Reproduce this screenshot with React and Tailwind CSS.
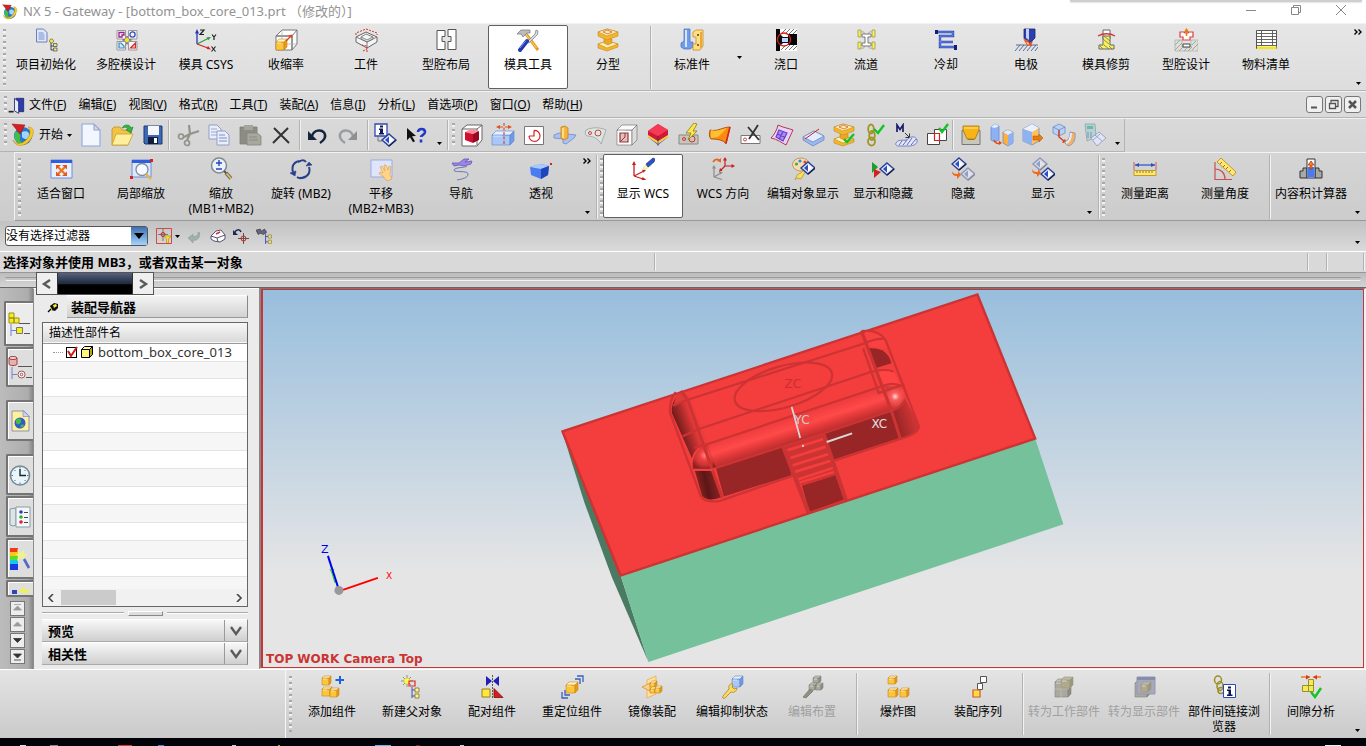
import React from 'react';

/* ---------- drawing helpers ---------- */

function Svg({ children, size = 'size-6', box = '0 0 24 24' }) {
  return (
    <svg viewBox={box} className={`${size} shrink-0`} fill="none" aria-hidden="true">
      {children}
    </svg>
  );
}

const GOLD = { f: '#fdc53a', t: '#fff3c0', s: '#e8981c', o: '#c98a1c' };
const BLUE = { f: '#a9c8f8', t: '#e4f0ff', s: '#6f9be6', o: '#5f84c8' };
const GRAY = { f: '#a9a99c', t: '#c4c4bb', s: '#8d8d83', o: '#85857c' };

function Box({ x, y, w, h, d = 3, c = GOLD }) {
  return (
    <g stroke={c.o} strokeWidth=".6" strokeLinejoin="round">
      <path d={`M${x} ${y + d}h${w}v${h}h${-w}z`} fill={c.f} />
      <path d={`M${x} ${y + d}l${d} ${-d}h${w}l${-d} ${d}z`} fill={c.t} />
      <path d={`M${x + w} ${y + d}l${d} ${-d}v${h}l${-d} ${d}z`} fill={c.s} />
      <path d={`M${x + 1} ${y + d + 1}h${w / 2}`} stroke="#fff" strokeWidth="1" opacity=".6" />
    </g>
  );
}

function Gem({ x, y, pale }) {
  return (
    <g opacity={pale ? 0.4 : 1}>
      <path d={`M${x} ${y - 6}l7 6-7 6-7-6z`} fill="#dfe6ff" stroke="#2a3f8f" strokeWidth="1.4" />
      <path d={`M${x} ${y - 3.5}v7l-4-3.5z`} fill="#2c4fc4" />
      <path d={`M${x} ${y - 3.5}v7l4-3.5z`} fill="#fff" />
      <path d={`M${x} ${y + 6}l7-6`} stroke="#1b2348" strokeWidth="1.4" />
    </g>
  );
}

const Check = ({ d = 'M12 18l3 3 7-9', w = 2.4 }) => <path d={d} stroke="#12c226" strokeWidth={w} />;

const Star = ({ x, y }) => (
  <g>
    <path d={`M${x - 6} ${y}h12M${x} ${y - 6}v12M${x - 4} ${y - 4}l8 8M${x + 4} ${y - 4}l-8 8`} stroke="#6f9a6a" strokeWidth=".9" />
    <circle cx={x} cy={y} r="3" fill="#fff36a" stroke="#e0c81a" strokeWidth=".6" />
  </g>
);

const Tree = ({ x, y }) => (
  <g>
    <path d={`M${x} ${y}v11M${x} ${y + 3}h3M${x} ${y + 9}h3`} stroke="#4550b5" strokeWidth="1" />
    <path d={`M${x + 3} ${y + 1}h4v4h-4zM${x + 3} ${y + 7}h4v4h-4z`} fill="#fbf29a" stroke="#8a7f2a" strokeWidth=".9" />
  </g>
);

const Plates = () => (
  <g stroke="#c08a22" strokeWidth=".6" strokeLinejoin="round">
    <path d="M2 16l9-3 11 3v3l-11 4-9-3z" fill="#f5b52b" />
    <path d="M2 16l9-3 11 3-11 4z" fill="#fff0b4" />
    <path d="M8 11l4-1 4 1v4l-4 2-4-2z" fill="#f0a428" />
    <path d="M2 4l9-3 11 3v4l-11 4L2 8z" fill="#f5b52b" />
    <path d="M2 4l9-3 11 3-11 4z" fill="#ffedb0" />
    <path d="M7 4l4-2 5 2-4 2z" stroke="#c03818" />
  </g>
);

/* ---------- icons ---------- */

const ICONS = {
  project: (
    <>
      <path d="M2.500 1h7l3.500 3.500V14H2.500z" fill="#dfe7fa" stroke="#6d7fb8" />
      <path d="M4.500 5h5M4.500 7h6M4.500 9h6M4.500 11h6" stroke="#7186c8" strokeWidth=".9" />
      <circle cx="17.500" cy="13" r="2" fill="#f5e94e" stroke="#77772a" strokeWidth=".8" />
      <path d="M17 15v7h3M17 18h3" stroke="#333" strokeWidth=".9" />
      <path d="M19.500 15.500h3.500v3h-3.500zM19.500 20h3.500v3h-3.500z" fill="#eee68c" stroke="#555" strokeWidth=".8" />
    </>
  ),
  multi: (
    <>
      <path d="M3 2.500h8.500v8.500H3zM14.500 2.500H23v8.500h-8.500zM3 13.500h8.500V22H3zM14.500 13.500H23V22h-8.500z" fill="#f6f6fa" stroke="#999" />
      <path d="M5 9V4.500h5V7H8v2z" stroke="#a0208c" strokeWidth="1.300" />
      <circle cx="18.500" cy="6.500" r="2.600" stroke="#2c50c0" strokeWidth="1.300" />
      <path d="M5 20v-5h2l3 3v2z" stroke="#3f88c4" strokeWidth="1.200" fill="#cfe6f8" />
      <path d="M16.500 20h5v-5z" stroke="#d42a2a" strokeWidth="1.200" fill="#ffc9c9" />
      <path d="M13 8v8.500M8.500 12h9" stroke="#333" />
      <path d="M13 9.500l2.500 2.500-2.500 2.500-2.500-2.500z" fill="#ffe61a" />
    </>
  ),
  csys: (
    <>
      <path d="M3 16V4" stroke="#2334b8" strokeWidth="1.300" /><path d="M3 1L1 5.500h4z" fill="#2334b8" />
      <path d="M3 16l11-5.500" stroke="#20a030" strokeWidth="1.200" /><path d="M17 9l-4.500.3 1.800 3z" fill="#20a030" />
      <path d="M3 16l11 4" stroke="#d42020" strokeWidth="1.200" /><path d="M17 21.500l-3-3.500-1.500 3z" fill="#d42020" />
      <path d="M6 2h4L6 6.500h4M18 6.500l2 2.500 2-2.500M20 9v3M17.500 18.500l4 5M21.500 18.500l-4 5" stroke="#222" strokeWidth="1.200" />
    </>
  ),
  shrink: (
    <>
      <path d="M2 8l6-6h15l-5 6zM18 8v14l5-6V2M2 8v14h16V8z" fill="#fff" stroke="#777" />
      <path d="M8 2v14h15M8 16l-6 6" stroke="#aaa" strokeWidth=".7" />
      <Box x={2} y={11} w={8} h={8} d={3} />
      <path d="M12 13l5-5" stroke="#e0461c" strokeWidth="1.400" /><path d="M18.500 6.500l-4 .8 3 3z" fill="#e0461c" />
    </>
  ),
  workpiece: (
    <>
      <path d="M2 9v5l11 6 10-6V9L12 4z" fill="#f4f4f4" stroke="#666" />
      <path d="M2 9l11 5 10-5M13 14v6M7 9l6 3 6-3-7-3zM7 9v2l6 3 6-3V9" stroke="#777" strokeWidth=".9" />
      <path d="M2 7V5l10-4 11 4v2M13 24v-6l-5-1M9 23l4-2" stroke="#d43030" strokeDasharray="2 1.200" />
    </>
  ),
  layout: (
    <g stroke="#555" fill="#fff">
      <path d="M3 2.500h8v6H8v5h3v8H3z" />
      <path d="M14 1.500h8v20h-8v-8h3v-5h-3z" />
    </g>
  ),
  hammer: (
    <>
      <path d="M10 6l12 16" stroke="#e79a1c" strokeWidth="3" />
      <path d="M9.500 6l11 14" stroke="#ffd680" strokeWidth="1" />
      <path d="M1 6l4-4h9v3h-3L7 9 5 6z" fill="#b9bdc2" stroke="#7b8086" strokeWidth=".8" />
      <path d="M11 14l8-8 1-4 2 1-.5 3.500L13 15z" fill="#d7dade" stroke="#71767c" strokeWidth=".7" />
      <path d="M4 22l7-9" stroke="#2238b0" strokeWidth="4" strokeLinecap="round" />
      <path d="M4 20l6-7.500" stroke="#7d93ee" strokeWidth="1" />
    </>
  ),
  parting: <Plates />,
  standard: (
    <>
      <path d="M4 1h6v13h3v5l-3 2H4l-3-2v-4l3-2z" fill="#6f9cec" stroke="#5578bc" strokeWidth=".8" />
      <path d="M6 2v17" stroke="#d6e5ff" strokeWidth="2" />
      <path d="M13 4l3-2h7v16l-3 4h-7v-6h3V9h-3z" fill="#ffdf86" stroke="#c98a1c" strokeWidth=".8" />
      <path d="M21 4v16" stroke="#e8a83c" strokeWidth="2" />
      <circle cx="18" cy="7" r="1" fill="#5a3a00" /><circle cx="18" cy="17" r="1" fill="#5a3a00" />
    </>
  ),
  gate: (
    <>
      <path d="M2 1h21v22H2z" fill="#fff" />
      <path d="M2 1h4v22H2zM14 6h9v11h-9z" fill="#050505" />
      <path d="M7 6l5-5M11 6l5-5M15 6l5-5M19 6l4-4M7 22l5-5M11 22l5-5M15 22l5-5M19 22l4-4" stroke="#666" strokeWidth=".9" />
      <path d="M6 6l3 3h5v6H9l-3 3z" fill="#111" />
      <path d="M8 10h6v4H8z" fill="#b8d8ff" />
      <circle cx="10" cy="11.500" r="6.500" stroke="#e01c1c" strokeWidth="1.300" />
    </>
  ),
  runner: (
    <>
      <path d="M5 4h5v3H5zM5 17h5v3H5zM15 4h5v3h-5zM15 17h5v3h-5z" fill="#fff" stroke="#999" strokeWidth=".8" />
      <path d="M8 6h9v3h-3v6h3v3H8v-3h3V9H8z" fill="#fff" stroke="#777" />
      <path d="M4 2h3v7H4zM18 2h3v7h-3zM4 14h3v7H4zM18 14h3v7h-3z" fill="#f6ef62" stroke="#a09a48" strokeWidth=".8" />
    </>
  ),
  cooling: (
    <>
      <path d="M3 4h16v4H6v6h13M6 13v6h15" stroke="#2446b8" strokeWidth="2.400" />
      <path d="M3 4h16v4H6v6h13M6 13v6h15" stroke="#8fa8f0" strokeWidth=".7" />
      <path d="M1 2h3v4H1zM20 17h3v5h-3z" fill="#101f80" />
    </>
  ),
  electrode: (
    <>
      <path d="M2 17h22M1 23l5-6M5 23l5-6M9 23l5-6M13 23l5-6M17 23l5-6M21 23l3-4" stroke="#5a6a9a" />
      <path d="M10 1h11v9l-5 5-1-1-5-4z" fill="#2a3fb0" stroke="#1b2670" strokeWidth=".8" />
      <path d="M12 1h3v11l-3-2z" fill="#c3d0f8" />
      <path d="M9 10l4 3 1-2 1 4 4-2-2 5-4-1-2-3z" fill="#f0521c" />
      <path d="M12 14l3 1-1 2z" fill="#ffe26a" />
    </>
  ),
  trim: (
    <>
      <path d="M9 2h7v9H9z" fill="#fff" stroke="#666" />
      <path d="M9 8h7v9h4v4H5v-4h4z" fill="#f3ef6a" stroke="#666" />
      <path d="M9 11l6 5M10 8l6 5M6 18l3 3M10 17l5 4M15 18l3 3" stroke="#7c7a25" strokeWidth=".8" />
      <path d="M4 8c5-3 12-3 17 0" stroke="#d83030" strokeWidth="1.300" />
    </>
  ),
  pocket: (
    <>
      <path d="M1 12h7v7h9v-7h7v11H1z" fill="#dededa" stroke="#aaa" strokeWidth=".7" />
      <path d="M1 17l5-5M1 22l7-7M5 23l4-4M10 23l3-3M14 23l4-4M18 22l6-6M18 17l4-4" stroke="#96a088" strokeWidth=".8" />
      <path d="M9 16v3h7v-3z" fill="#fff" stroke="#444" />
      <path d="M6 4h4l1 1h3l1-1h4v5h-3v3H9V9H6z" fill="#fff" stroke="#e03c3c" strokeWidth="1.200" />
      <path d="M12.500 8V3" stroke="#e87a10" strokeWidth="1.500" /><path d="M10 4l2.500-4L15 4z" fill="#e87a10" />
    </>
  ),
  bom: (
    <>
      <path d="M2.500 2.500h20v18h-20z" fill="#fff" stroke="#555" />
      <path d="M3 18.500h19.500V21H3z" fill="#f5e51c" />
      <path d="M2 5.500h21M2 8.500h21M2 11.500h21M2 14.500h21M2 17.500h21M7.500 2.500v15M18.500 2.500v15" stroke="#555" strokeWidth=".9" />
    </>
  ),

  logo: (
    <>
      <circle cx="12" cy="13" r="9" fill="#2a74c8" />
      <path d="M4 9c4-1 6 3 5 6s2 5 5 7c-7 1-12-5-10-13z" fill="#3fbf4a" />
      <path d="M11 9c4-2 8 0 7 4s-4 4-7 1z" fill="#9fd6ff" />
      <path d="M2 17c3 6 12 4 16-4 2-4 1-7-1-9 5 0 7 4 4 10-4 9-16 12-19 3z" fill="#f9cb1e" stroke="#b8860f" strokeWidth=".5" />
      <path d="M1 1l13 1-5 9z" fill="#d81e1e" stroke="#8f0f0f" strokeWidth=".5" />
    </>
  ),
  door: (
    <>
      <path d="M11 4h9v16h-9z" fill="#2c3bb4" stroke="#20285f" />
      <path d="M9 4l5 4v14l-5-3z" fill="#e6ecff" stroke="#20285f" />
      <path d="M2 20h6" stroke="#222" strokeWidth="2" />
    </>
  ),
  fileNew: <path d="M3 1h12l6 6v16H3zM15 1v6h6" fill="#f1f6ff" stroke="#8fa6dc" strokeWidth="1.100" />,
  fileOpen: (
    <>
      <path d="M2 6l2-2h6l2 3h9v4L18 22H2z" fill="#f3c444" stroke="#b8922c" strokeWidth=".8" />
      <path d="M2 22l4-11h17l-5 11z" fill="#ffee9c" stroke="#c89f34" strokeWidth=".8" />
      <path d="M12 5c2-4 8-4 9 0l2-1-2 6-5-3 2-1c-1-2-4-2-6-1z" fill="#33b540" stroke="#1d7a28" strokeWidth=".6" />
    </>
  ),
  save: (
    <>
      <path d="M3 3h18v18H4l-1-1z" fill="#3f68b4" stroke="#1e3670" />
      <path d="M7 3h11v9H7z" fill="#f4f6fb" />
      <path d="M7 14h10v7H7z" fill="#101d3c" />
      <path d="M13 15h3v5h-3z" fill="#fff" />
    </>
  ),
  cut: (
    <g stroke="#93938a" strokeWidth="1.700">
      <path d="M13 2l1 9-3 6" strokeWidth="2.200" /><path d="M23 8l-9 3-6 3" strokeWidth="2.200" />
      <circle cx="5" cy="13.500" r="2.500" /><circle cx="11" cy="20" r="2.500" />
    </g>
  ),
  copy: (
    <g fill="#e8eefc" stroke="#8a97be" strokeWidth=".9">
      <path d="M2 2h8l4 4v10H2z" /><path d="M4 6h6M4 9h7M4 12h7" strokeWidth=".8" />
      <path d="M10 8h8l4 4v10H10z" /><path d="M12 12h6M12 15h8M12 18h8" stroke="#7484bc" />
    </g>
  ),
  paste: (
    <>
      <path d="M2 4h17v17H2z" fill="#8c8c84" stroke="#7d7d76" strokeWidth=".8" />
      <path d="M6 2h9v5H6z" fill="#a5a59c" />
      <path d="M9 10h10l4 3v9H9z" fill="#a8a89f" stroke="#85857d" strokeWidth=".8" />
      <path d="M11 14h8M11 17h9" stroke="#8a8a82" />
    </>
  ),
  del: <path d="M5 5l15 15M19 5L4 20" stroke="#333" strokeWidth="2" />,
  undo: (
    <>
      <path d="M7 13C9 7 16 6 19 9.500c3 4 0 8-4 10.500" stroke="#16233f" strokeWidth="2.400" />
      <path d="M3 8v9h9z" fill="#16233f" />
    </>
  ),
  redo: (
    <>
      <path d="M17 13C15 7 8 6 5 9.500c-3 4 0 8 4 10.500" stroke="#9a9da0" strokeWidth="2.400" />
      <path d="M21 8v9h-9z" fill="#8c9092" />
    </>
  ),
  info: (
    <>
      <path d="M2 1h12v12H2z" fill="#fff" stroke="#3148b8" strokeWidth="1.300" />
      <path d="M7 2.500h3v2H7zM6 5.500h4v4.500h1v1.500H6V10h1V7H6z" fill="#131c50" />
      <path d="M5 14v4h4" stroke="#777" />
      <Gem x={16} y={17} />
    </>
  ),
  help: (
    <>
      <path d="M3 5l9 8-4 .3 3 5-2 1-3-5-3 3z" fill="#111" />
      <path d="M14 9c0-4 7-4 7 0 0 3-4 3-4 5M17 16.500v3" stroke="#2238c8" strokeWidth="2.600" />
    </>
  ),
  redCube: (
    <>
      <path d="M2 6l5-4h15v15l-5 6H2zM2 6h15v16M17 6l5-4" fill="#fff" stroke="#666" />
      <path d="M5 9l6-3 8 2-6 3z" fill="#ff8c9c" /><path d="M5 9l8 2v9l-8-3z" fill="#d01030" /><path d="M13 11l6-3v9l-6 3z" fill="#960a20" />
    </>
  ),
  split: (
    <>
      <Box x={1} y={8} w={18} h={10} d={4} c={BLUE} />
      <path d="M13 0v22" stroke="#d02020" strokeDasharray="3 1.500" strokeWidth=".9" />
      <path d="M5 4l4-2v1.500h3v1H9V6zM21 4l-4-2v1.500h-3v1h3V6z" fill="#e0521c" />
    </>
  ),
  patch: (
    <>
      <path d="M2.500 3.500h19v18h-19z" fill="#fff" stroke="#777" />
      <path d="M12 7.500V13H7M12 7.500A5.500 5.500 0 1 1 7 13" stroke="#d02424" strokeWidth="1.200" />
    </>
  ),
  joint: (
    <>
      <path d="M1 12l5-2 17 2-2 3-8 6-3-1v-4l-9-1z" fill="#a9c2f5" stroke="#6f8ac8" strokeWidth=".8" />
      <path d="M8 4l4-1 3 2v10l-4 2-3-2z" fill="#f6b43a" stroke="#b9790f" strokeWidth=".7" /><path d="M10 5v10" stroke="#ffe9a8" strokeWidth="1.500" />
    </>
  ),
  surface: (
    <>
      <path d="M2 7c7-3 13-3 20 0l-5 14c-2-4-6-8-14-8-2-1-2-4-1-6z" fill="#dbe6e2" stroke="#9aaaa6" strokeWidth=".9" />
      <circle cx="6" cy="10" r="1.500" stroke="#d03030" strokeWidth=".9" /><circle cx="14" cy="10" r="3" stroke="#d03030" strokeWidth=".9" />
    </>
  ),
  boxFrame: (
    <>
      <Box x={2} y={2} w={15} h={15} d={5} c={{ f: '#fff', t: '#fafafa', s: '#ddd', o: '#666' }} />
      <path d="M5 10h8v9H5z" fill="#d9c3c3" stroke="#a03030" strokeWidth="1.200" />
      <path d="M6 18l4-4v-4" stroke="#a03030" />
    </>
  ),
  layers: (
    <>
      <path d="M2 14l10 8 10-8v-5H2z" fill="#3655c8" />
      <path d="M2 11l10 7 10-7v3l-10 7-10-7z" fill="#ffcf3a" />
      <path d="M2 8l10-7 10 6v5l-10 6L2 12z" fill="#d01838" /><path d="M2 8l10-7 10 6-10 6z" fill="#f43a54" />
      <path d="M12 13v10" stroke="#22326e" strokeWidth=".6" />
    </>
  ),
  flash: (
    <>
      <path d="M2 12h19v9H2z" fill="#c6c6bd" stroke="#888" />
      <circle cx="7" cy="16" r="1.500" stroke="#d03030" /><circle cx="15" cy="16" r="3" stroke="#d03030" />
      <path d="M17 0L9 10h5l-3 7 9-9h-4l4-7z" fill="#ffe74a" stroke="#8a7a1a" strokeWidth=".8" />
    </>
  ),
  orangeSheet: (
    <>
      <path d="M2 7c7 2 13-3 20-3l-4 17c-2-4-9-5-15-5-2-2-2-6-1-9z" fill="#f98b12" stroke="#a83c08" strokeWidth=".8" />
      <path d="M3 7c7 2 11-1 16-2l-9 9-7 1z" fill="#ffd03a" opacity=".8" />
      <path d="M18 20l4-16" stroke="#d82020" strokeWidth="1.500" />
    </>
  ),
  cutSheet: (
    <>
      <path d="M2 12.500h19v8H2z" fill="#fff" stroke="#777" />
      <circle cx="6" cy="16.500" r="1.500" stroke="#d03030" strokeWidth=".9" />
      <path d="M9 4l11 13M19 2l-9 14" stroke="#333" strokeWidth="1.800" />
    </>
  ),
  grid: (
    <>
      <path d="M8 2c6 3 10 3 15 5l-7 15c-4-2-9-6-15-7 3-3 6-8 7-13z" fill="#e3d5fa" stroke="#c03050" />
      <path d="M9 7l8 3-4 8-7-4zM13 8.500l-4 8M7.500 11l8 3.500" stroke="#6a3cc8" strokeWidth="1.200" fill="#a98cf0" />
    </>
  ),
  slab: (
    <>
      <path d="M2 14l11-6 10 5v4l-11 6-10-6z" fill="#9ab9f0" stroke="#6f88c0" strokeWidth=".8" /><path d="M2 14l11-6 10 5-11 6z" fill="#e2edff" stroke="#6f88c0" strokeWidth=".8" />
      <path d="M4 16L18 6" stroke="#d02020" />
    </>
  ),
  partCheck: (<><Plates /><Check d="M12 16l3 3 7-8" /></>),
  chainCheck: (
    <>
      <g stroke="#a19524" strokeWidth="1.800"><ellipse cx="8" cy="6" rx="2.800" ry="4.500" /><ellipse cx="9" cy="12.500" rx="2.800" ry="4.500" /><ellipse cx="8.500" cy="18.500" rx="3.500" ry="4" /></g>
      <Check d="M11 6l4 4 6-8" />
    </>
  ),
  mHatch: (
    <>
      <path d="M3 9V2l3 4.500L9 2v7" stroke="#1b1b6a" strokeWidth="1.700" />
      <path d="M11 10l4 4M15.500 14.500v-4M15.500 14.500h-4" stroke="#333" />
      <path d="M2 20c3-5 9-1 12-4s8-3 9 1-4 6-8 6H5c-2 0-4-1-3-3z" fill="#e3e8fa" stroke="#5a68b8" strokeWidth=".8" />
      <path d="M5 22l3-4M9 22l4-5M13 22l5-7M17 22l5-6" stroke="#3a48a8" strokeWidth=".8" />
    </>
  ),
  squaresCheck: (
    <>
      <path d="M2.500 10.500h12v11h-12z" fill="#fff" stroke="#444" /><path d="M9.500 6.500h12v11h-12z" fill="#fff" stroke="#444" />
      <path d="M9.500 10.500h5v7h-5z" stroke="#d82020" strokeWidth="1.200" />
      <Check d="M14 5l3 4 6-8" />
    </>
  ),
  mold: (
    <>
      <path d="M3 7.500h3l3 9h6l3-9h3v14H3z" fill="#c8c8b8" stroke="#777" />
      <path d="M4 3h16v4l-4 9H8L4 7z" fill="#f8b414" stroke="#a8740c" strokeWidth=".8" /><path d="M5 5h14" stroke="#ffe48a" strokeWidth="1" />
    </>
  ),
  cubesA: (
    <>
      <path d="M1 4l4-3 4 2v14l-4 2-4-2z" fill="#8db2f4" stroke="#6a8ac8" strokeWidth=".8" /><path d="M1 4l4-3 4 2-4 2z" fill="#e2eeff" />
      <path d="M13 9l5-2 5 2v11l-5 3-5-3z" fill="#ffb03a" stroke="#6a8ac8" strokeWidth=".8" /><path d="M18 12v11l5-3V9z" fill="#8db0f2" /><path d="M13 9l5-2 5 2-5 3z" fill="#dce9ff" />
      <path d="M4 17c2 4 4 4 6 3" stroke="#e04a10" strokeWidth="1.600" /><path d="M12 20l-3-2.500v4.500z" fill="#e04a10" />
    </>
  ),
  cubesB: (
    <>
      <path d="M2 6l9-5 7 4v13l-7 4-9-4z" fill="#ffc25a" stroke="#6a8ac8" strokeWidth=".8" /><path d="M2 6l9-5 7 4-7 4z" fill="#e8f1ff" /><path d="M2 6l9 3v13l-9-4z" fill="#8fb2f2" />
      <path d="M12 13h6v-2l4 4-4 4v-2h-6z" fill="#e87a14" stroke="#a85008" strokeWidth=".5" />
    </>
  ),
  cubesC: (
    <>
      <path d="M1 4l6-3 6 3v6l-6 3-6-3z" fill="#b9d0f8" stroke="#6a8ac8" strokeWidth=".8" /><path d="M1 4l6 3 6-3M7 7v6" stroke="#6a8ac8" strokeWidth=".8" />
      <path d="M7 7v7l6 5" stroke="#d83c10" strokeWidth="1.400" /><path d="M15 20.500l-5-1 3-3.500z" fill="#d83c10" />
      <path d="M18 9l5 1c1 7-2 12-7 13l-4-4c4-1 6-4 6-10z" fill="#f7b15a" stroke="#7a90c8" strokeWidth=".8" /><path d="M19 10c0 6-2 9-5 10" stroke="#e0eaff" strokeWidth="2" />
    </>
  ),
  calc: (
    <>
      <path d="M2 1h10l1 13-9 4z" fill="#b7d0d6" stroke="#8aa4ac" strokeWidth=".8" /><path d="M4 3h6v3H4z" fill="#6abaa6" />
      <path d="M5 9v6M8 9v6" stroke="#7a98a2" />
      <path d="M8 15l8-6 7 6-9 8z" fill="#e0e5f6" stroke="#8a97bc" strokeWidth=".8" /><path d="M12 12l7 6M10 17l7-6" stroke="#8a97bc" strokeWidth=".8" />
    </>
  ),

  fit: (
    <>
      <path d="M2 3h21v18H2z" fill="#e8f0ff" stroke="#6d8ce0" /><path d="M2 3h21v3H2z" fill="#2f5edc" />
      <path d="M9 10l7 7M16 10l-7 7" stroke="#f0761c" strokeWidth="2.200" />
      <path d="M7 8h5l-5 4.500zM18 8v4.500L13 8zM7 19v-4.500l5 4.500zM18 19h-5l5-4.500z" fill="#e4561a" />
    </>
  ),
  region: (
    <>
      <path d="M3 3h19v17H3z" fill="#dce8ff" stroke="#6d8ce0" /><path d="M3 3h19v3H3z" fill="#2f5edc" />
      <circle cx="13" cy="12.500" r="6" fill="#f4faff" stroke="#889" strokeWidth="1.300" />
      <path d="M17 17l5 5" stroke="#d8b850" strokeWidth="2.500" />
      <path d="M1 19h3v3H1zM21 2h3v3h-3z" fill="#e01c1c" />
    </>
  ),
  zoom: (
    <>
      <circle cx="10" cy="8.500" r="7.500" fill="#eaf1fa" stroke="#83888e" strokeWidth="1.500" />
      <path d="M10 3v6M7 6h6M7 12h6" stroke="#2a44c0" strokeWidth="1.400" />
      <path d="M15 14l2.500 2.500" stroke="#555" strokeWidth="2" /><path d="M17 16l5 5.500" stroke="#666" strokeWidth="3.600" /><path d="M17.500 16.500l4.500 5" stroke="#f0c250" strokeWidth="1.800" />
    </>
  ),
  rotate: (
    <g stroke="#27408a" strokeWidth="2">
      <path d="M4 15C2 8 6 4 12 4M11 21c7 0 11-5 9-11M9 5.500C11 3 15 2.500 17 5M16 19.500c-3 2-6 2-8 .5" />
      <path d="M1 16l6-2-1 5zM23 8l-6 1 3-4z" fill="#27408a" strokeWidth=".6" />
    </g>
  ),
  pan: (
    <>
      <path d="M2 3h21v17H2z" fill="#dfe6fc" stroke="#9cabe0" />
      <path d="M11 15l3 1-3-6 2-1 3 5-1-6h2l2 5 1-4 2 1-1 8 2 4-5 2-4-5-4-2z" fill="#ffd48a" stroke="#d8a45c" strokeWidth=".7" />
    </>
  ),
  nav: (
    <>
      <path d="M3 6l7 0 5-4h5l-4 3 7-1-1 3-7 2-5-1-5 1z" fill="#9b86e8" stroke="#5c4db0" strokeWidth=".7" />
      <path d="M18 9c-2 2-12 1-13 4s14 0 14 4-6 5-11 6" stroke="#6a76b4" strokeWidth="1" />
    </>
  ),
  persp: (
    <>
      <path d="M1 10l11-3 8 2-1 9-7 4-10-4z" fill="#4a7bf0" /><path d="M1 10l11-3 8 2-8 3z" fill="#a8cbff" /><path d="M12 12l8-3-1 9-7 4z" fill="#1e45b8" />
      <path d="M21 6h2v2h-2z" fill="#e01c1c" />
    </>
  ),
  wcs: (
    <>
      <path d="M3 19V7M3 19l9-4.500M3 19l9 3" stroke="#c81e1e" strokeWidth="1.300" />
      <path d="M3 4L1 8h4zM15 13l-4-.3 1.500 3zM15.500 23l-4-3-.8 3z" fill="#c81e1e" />
      <path d="M12 11l6-5 2 2.500-6 4z" fill="#ffffb0" stroke="#c8c888" strokeWidth=".6" />
      <path d="M15 7l7-6 2 1-1 3-6 5z" fill="#2a55c8" stroke="#18307a" strokeWidth=".7" />
    </>
  ),
  wcsDir: (
    <>
      <path d="M3 20V11M3 20l7-4M3 20l8 2.500" stroke="#8c8c8c" strokeWidth="1.200" /><path d="M3 8l-2 3.500h4zM12 15l-4 0 1.500 2.500z" fill="#8c8c8c" />
      <path d="M14 9V3M14 9h7M14 9l-4 4" stroke="#c81e1e" strokeWidth="1.200" /><path d="M14 0l-2 3.500h4zM24 9l-3.500-2v4zM8 15l1-4 2.500 2.500z" fill="#c81e1e" />
      <path d="M2 5c2-3 4-3 6-2" stroke="#e8641c" strokeWidth="1.800" /><path d="M10 1v4.500L6 4z" fill="#e8641c" />
    </>
  ),
  palette: (
    <>
      <ellipse cx="10" cy="7.500" rx="8.500" ry="6.500" fill="#f8dcae" stroke="#b8935c" strokeWidth=".9" />
      <circle cx="5.500" cy="7" r="1.600" fill="#3ab04a" /><circle cx="9" cy="4" r="1.600" fill="#2c8ae0" /><circle cx="14" cy="5" r="1.600" fill="#e04a3a" />
      <path d="M4 23l2-5 5-3 4-6 2 2-4 6-3 5-4-1z" fill="#f8dc5a" stroke="#b89a34" strokeWidth=".8" />
      <Gem x={17} y={11} />
    </>
  ),
  showHide: (
    <>
      <path d="M1 5l6 5-6 6z" fill="#18a028" /><path d="M3 12l7 3-7 6z" fill="#d42020" /><Gem x={16} y={12} />
    </>
  ),
  hide: (
    <>
      <Gem x={8} y={7} /><Gem x={17} y={17} pale />
      <path d="M1 14c1 3 4 3 6 3v-3l3 4-4 4v-3c-3 0-5-1-5-5z" fill="#ec6a1c" />
    </>
  ),
  show: (
    <>
      <Gem x={9} y={7} pale /><Gem x={17} y={17} />
      <path d="M1 12c1 3 4 3 6 3v-3l3 4-4 4v-3c-3 0-5-1-5-5z" fill="#ec6a1c" />
    </>
  ),
  dist: (
    <>
      <path d="M1 5v8M23 5v8" stroke="#c85c5c" /><path d="M2 8h20" stroke="#2a50c0" strokeWidth="1.200" /><path d="M2 8l4-2v4zM22 8l-4-2v4z" fill="#2a50c0" />
      <path d="M1 13.500h22v5H1z" fill="#ffe774" stroke="#c09a30" /><path d="M4 14v2M7 14v2M10 14v2M13 14v2M16 14v2M19 14v2" stroke="#9a7510" />
    </>
  ),
  angle: (
    <>
      <path d="M2 5v17.500h17M2 12c6 0 10 4 10 10" stroke="#c85050" strokeWidth="1.200" />
      <path d="M4 5l4-4 15 14-3 4z" fill="#ffe774" stroke="#c09a30" /><path d="M7 7l2-2M10 10l2-2M13 12l2-2M16 15l2-2" stroke="#9a7510" />
    </>
  ),
  volume: (
    <>
      <path d="M1 14h3v-3h4v10H1zM23 14h-3v-3h-4v10h7z" fill="#a8a8a8" stroke="#333" />
      <path d="M8 2h8v19H8z" fill="#fff" stroke="#333" /><path d="M8.500 10h7v10.500h-7z" fill="#4a7cf0" />
      <path d="M12 4l3 4h-2v4h-2V8H9z" fill="#f08020" stroke="#b02c10" strokeWidth=".7" />
    </>
  ),

  addComp: (
    <>
      <Box x={2} y={1} w={7} h={7} d={2} /><Box x={2} y={12} w={8} h={7} d={2} /><Box x={10} y={13} w={7} h={7} d={2} />
      <path d="M20 1v8M15.500 5h9" stroke="#1f62e0" strokeWidth="2" />
    </>
  ),
  newParent: (<><Star x={7} y={6} /><path d="M9 6h6v5H9z" stroke="#e02a2a" strokeWidth="1.200" /><Tree x={12} y={12} /></>),
  mate: (
    <>
      <path d="M6 1l6 5-6 5zM19 1l-6 5 6 5z" fill="#1f1fb8" /><path d="M12.500 0v24" stroke="#555" strokeDasharray="2 1" />
      <path d="M2 14h8v8H2z" fill="#ffe83a" stroke="#88741a" strokeWidth=".9" /><path d="M14 13.500l9 9h-9z" fill="#d81c1c" stroke="#7c1010" strokeWidth=".8" />
    </>
  ),
  repos: (
    <>
      <Box x={6} y={7} w={9} h={8} d={3} />
      <path d="M17 1h6v6M15 4h5v5M8 23H2v-6M10 20H5v-5" stroke="#3a5fc0" strokeWidth="1.300" />
    </>
  ),
  mirror: (
    <>
      <path d="M7 5l9-4v18l-9 4z" fill="#ffe0a0" stroke="#e8ac4a" strokeWidth=".8" /><path d="M2 12l8-4v8z" fill="#ffd08a" stroke="#d8932a" strokeWidth=".8" />
      <Box x={10} y={6} w={5} h={4} d={2} /><Box x={10} y={12} w={5} h={4} d={2} /><Box x={15} y={11} w={5} h={5} d={2} />
    </>
  ),
  suppress: (
    <>
      <Box x={12} y={1} w={8} h={8} d={3} c={BLUE} />
      <path d="M3 21l6-7c-1-3 1-6 4-5l-1 3 2 2 3-1c0 3-3 5-6 4l-6 6c-2 1-3 0-2-2z" fill="#ffd95a" stroke="#a8862c" strokeWidth=".8" />
    </>
  ),
  arrange: (
    <>
      <Box x={13} y={1} w={6} h={5} d={2} c={GRAY} /><Box x={9} y={8} w={6} h={5} d={2} c={GRAY} /><Box x={16} y={8} w={5} h={5} d={2} c={GRAY} />
      <path d="M3 22l7-8 3 2-7 7z" fill="#8f8f86" stroke="#85857c" />
    </>
  ),
  explode: (<><Box x={2} y={1} w={7} h={6} d={2} /><Box x={2} y={13} w={8} h={7} d={2} /><Box x={14} y={13} w={7} h={7} d={2} /></>),
  sequence: (
    <>
      <path d="M14.500 1.500h6v6h-6zM11.500 8.500h5v6h-5z" fill="#fff" stroke="#555" />
      <path d="M7 15h7v7H7z" fill="#ffe24a" stroke="#e0521c" strokeWidth="1.200" />
    </>
  ),
  workPart: (<><Box x={3} y={4} w={13} h={15} d={3} c={GRAY} /><path d="M3 14h13l3-3M9 8v14" stroke="#b9b9b0" /><Box x={9} y={2} w={9} h={8} d={3} c={{ f: '#b0a98c', t: '#beb9a3', s: '#9c967c', o: '#9c977f' }} /></>),
  showPart: (<><Box x={3} y={5} w={12} h={14} d={3} c={GRAY} /><path d="M5 2h18v17H5z" fill="#a6a9bb" stroke="#9698ac" /><path d="M5 2h18v3H5z" fill="#868cab" /><Box x={9} y={7} w={7} h={7} d={3} c={{ f: '#b0a98c', t: '#beb9a3', s: '#9c967c', o: '#9c977f' }} /></>),
  linkInfo: (
    <>
      <g stroke="#9a8f24" strokeWidth="1.500"><ellipse cx="6" cy="5" rx="3.500" ry="4" /><ellipse cx="8" cy="11" rx="3" ry="4.500" /><ellipse cx="9" cy="15.500" rx="3" ry="3" /></g>
      <path d="M11.500 9.500h12v13h-12z" fill="#fff" stroke="#2c48c0" /><path d="M16 11.500h3v2h-3zM15 14.500h4v5h1.500V21h-5.500v-1.500h1.500V16H15z" fill="#101850" />
    </>
  ),
  clearance: (
    <>
      <path d="M2 2h6M22 2h-6" stroke="#e87a1c" strokeWidth="1.400" /><path d="M11.500 2L7 0v4.500zM13.500 2L18 0v4.500z" fill="#e0341c" />
      <path d="M3.500 10.500h6v6h-6zM9.500 4.500h5v12h-5zM9.500 10.500h5" fill="#f3ec5a" stroke="#9a8d2c" />
      <Check d="M12 17l4 5 6-9" />
    </>
  ),
};

function Icon({ name, size }) {
  return <Svg size={size}>{ICONS[name]}</Svg>;
}

/* ---------- toolbar parts ---------- */

function Tool({ icon, label, active, disabled }) {
  return (
    <button
      type="button"
      disabled={disabled}
      className={`flex h-16 w-20 shrink-0 flex-col items-center gap-[5px] rounded-xs border pt-0.5 text-center leading-[15px] ${
        active ? 'border-[#606060] bg-white' : 'border-transparent'
      } ${disabled ? 'text-[#a0a0a0]' : 'text-black'}`}
    >
      <Icon name={icon} />
      <span>{label}</span>
    </button>
  );
}

function Small({ icon, label, size = 'size-6' }) {
  return (
    <button type="button" aria-label={label} className="flex w-[31px] shrink-0 justify-center">
      <Icon name={icon} size={size} />
    </button>
  );
}

const Grip = () => (
  <span className="my-1 w-[3px] shrink-0 self-stretch bg-[linear-gradient(#a8a8a8_2px,#f2f2f2_2px,#f2f2f2_4px,transparent_4px)] bg-[length:3px_6px]" />
);

const Sep = () => <span className="my-px w-0.5 shrink-0 self-stretch border-l border-[#b2b2b2] bg-[#f2f2f2]" />;

const Caret = () => (
  <svg viewBox="0 0 5 3" className="h-[3px] w-[5px] shrink-0" aria-hidden="true">
    <path d="M0 0h5L2.500 3z" fill="#000" />
  </svg>
);

function Overflow({ chevron = true }) {
  return (
    <button type="button" aria-label="工具条选项" className="flex h-16 w-3 shrink-0 flex-col items-center justify-between pt-1 pb-1">
      {chevron ? (
        <svg viewBox="0 0 8 6" className="h-1.5 w-2" fill="none" stroke="#000" strokeWidth="1.400" aria-hidden="true">
          <path d="M.5 .5L3 3 .5 5.500M4.500 .5L7 3 4.500 5.500" />
        </svg>
      ) : (
        <span />
      )}
      <Caret />
    </button>
  );
}

const MENUS = [
  ['文件', 'F'], ['编辑', 'E'], ['视图', 'V'], ['格式', 'R'], ['工具', 'T'], ['装配', 'A'],
  ['信息', 'I'], ['分析', 'L'], ['首选项', 'P'], ['窗口', 'O'], ['帮助', 'H'],
];

function TitleBar() {
  return (
    <header className="relative flex h-[23px] shrink-0 items-center bg-white pl-0.5 text-[#929292]">
      <Icon name="logo" size="size-4" />
      <h1 className="ml-[5px] flex-1 text-[13px] whitespace-pre">NX 5 - Gateway - [bottom_box_core_013.prt （修改的）]</h1>
      <div className="absolute top-0 right-1 h-px w-[292px] bg-[#cfcfcf] shadow-[0_1px_2px_#999]" />
      <div className="mt-1 flex gap-[33px] self-start pr-[19px] text-[#888]">
        <button type="button" aria-label="最小化" className="size-3">
          <Svg size="size-3" box="0 0 12 12"><path d="M1 6.500h10" stroke="currentColor" /></Svg>
        </button>
        <button type="button" aria-label="还原" className="size-3">
          <Svg size="size-3" box="0 0 12 12"><path d="M1.500 3.500h7v7h-7zM3.500 3.500v-2h7v7h-2" stroke="currentColor" /></Svg>
        </button>
        <button type="button" aria-label="关闭" className="size-3">
          <Svg size="size-3" box="0 0 12 12"><path d="M1 1l10 10M11 1L1 11" stroke="currentColor" /></Svg>
        </button>
      </div>
    </header>
  );
}

function MoldRow() {
  return (
    <div className="flex h-[68px] items-start border-t border-b border-t-[#f2f2f2] border-b-[#b4b4b4] pt-px pl-[3px]">
      <Grip />
      <Tool icon="project" label="项目初始化" />
      <Tool icon="multi" label="多腔模设计" />
      <Tool icon="csys" label="模具 CSYS" />
      <Tool icon="shrink" label="收缩率" />
      <Tool icon="workpiece" label="工件" />
      <Tool icon="layout" label="型腔布局" />
      <span className="w-0.5" />
      <Tool icon="hammer" label="模具工具" active />
      <Tool icon="parting" label="分型" />
      <span className="w-0.5" />
      <Sep />
      <Tool icon="standard" label="标准件" />
      <button type="button" aria-label="更多标准件" className="flex h-16 w-3.5 shrink-0 items-center justify-center"><Caret /></button>
      <Tool icon="gate" label="浇口" />
      <Tool icon="runner" label="流道" />
      <Tool icon="cooling" label="冷却" />
      <Tool icon="electrode" label="电极" />
      <Tool icon="trim" label="模具修剪" />
      <Tool icon="pocket" label="型腔设计" />
      <Tool icon="bom" label="物料清单" />
      <span className="flex-1" />
      <Overflow />
      <span className="w-0.5" />
    </div>
  );
}

function DocButton({ label, children }) {
  return (
    <button type="button" aria-label={label} className="flex size-[17px] items-center justify-center rounded-[3px] border border-[#777] bg-[#f0f0f0]">
      <svg viewBox="0 0 11 11" className="size-[11px]" fill="none" stroke="#555" aria-hidden="true">{children}</svg>
    </button>
  );
}

function MenuRow() {
  return (
    <nav className="flex h-[27px] items-center border-t border-b border-t-[#f2f2f2] border-b-[#b4b4b4] pr-[5px] pl-1">
      <Grip />
      <Icon name="door" size="size-5" />
      <div className="ml-0.5 flex gap-3">
        {MENUS.map(([name, key]) => (
          <button key={key} type="button" className="whitespace-nowrap">
            {name}(<u>{key}</u>)
          </button>
        ))}
      </div>
      <div className="ml-auto flex gap-0.5">
        <DocButton label="最小化文档"><path d="M2 8.500h6" strokeWidth="2" /></DocButton>
        <DocButton label="还原文档"><path d="M3 3.500V1.500h7v6H8M1.500 4.500h6v5h-6z" strokeWidth="1.300" /></DocButton>
        <DocButton label="关闭文档"><path d="M2 2l7 7M9 2L2 9" strokeWidth="2.500" /></DocButton>
      </div>
    </nav>
  );
}

const PART_TOOLS = [
  ['redCube', '创建方块'], ['split', '分割实体'], ['patch', '实体补片'], ['joint', '边补片'], ['surface', '修补曲面'],
  ['boxFrame', '自动孔修补'], ['layers', '编辑分型面'], ['flash', '快速补片'], ['orangeSheet', '扩大曲面'], ['cutSheet', '裁剪片体'],
  ['grid', '面拆分'], ['slab', '修剪区域'], ['partCheck', '分型检查'], ['chainCheck', '链接检查'], ['mHatch', '材料'], ['squaresCheck', '比较'],
];

const SOLID_TOOLS = [['mold', '型腔'], ['cubesA', '替换实体'], ['cubesB', '延伸实体'], ['cubesC', '参考圆角'], ['calc', '计算']];

function StandardRow() {
  return (
    <div className="flex h-[34px] border-t border-[#f2f2f2]">
      <div className="flex items-center border-r border-b border-[#b4b4b4] pl-1">
        <Grip />
        <button type="button" className="ml-1 flex w-16 shrink-0 items-center whitespace-nowrap">
          <Icon name="logo" />
          <span className="mx-1">开始</span>
          <Caret />
        </button>
        <Small icon="fileNew" label="新建" />
        <Small icon="fileOpen" label="打开" />
        <Small icon="save" label="保存" />
        <Sep />
        <span className="w-0.5" />
        <Small icon="cut" label="剪切" />
        <Small icon="copy" label="复制" />
        <Small icon="paste" label="粘贴" />
        <Small icon="del" label="删除" />
        <span className="w-[3px]" />
        <Sep />
        <Small icon="undo" label="撤消" />
        <Small icon="redo" label="重做" />
        <span className="w-1" />
        <Sep />
        <Small icon="info" label="对象信息" />
        <Small icon="help" label="帮助" />
        <button type="button" aria-label="更多" className="flex w-4 shrink-0 items-end justify-center self-stretch pb-1.5"><Caret /></button>
        <Sep />
        <span className="w-[3px]" />
        <Grip />
        <span className="w-px" />
        {PART_TOOLS.map(([icon, label]) => <Small key={icon} icon={icon} label={label} />)}
        <Sep />
        <span className="w-px" />
        {SOLID_TOOLS.map(([icon, label]) => <Small key={icon} icon={icon} label={label} />)}
        <button type="button" aria-label="更多" className="flex w-3.5 shrink-0 items-end justify-center self-stretch pb-1.5"><Caret /></button>
      </div>
    </div>
  );
}

function ViewRow() {
  return (
    <div className="ml-3.5 flex h-[69px] items-start border-t border-b border-l border-t-[#f2f2f2] border-b-[#999] border-l-[#f2f2f2] pt-px pl-[3px]">
      <Grip />
      <Tool icon="fit" label="适合窗口" />
      <Tool icon="region" label="局部缩放" />
      <Tool icon="zoom" label="缩放 (MB1+MB2)" />
      <Tool icon="rotate" label="旋转 (MB2)" />
      <Tool icon="pan" label="平移 (MB2+MB3)" />
      <Tool icon="nav" label="导航" />
      <Tool icon="persp" label="透视" />
      <Overflow />
      <span className="w-[3px]" />
      <Sep />
      <span className="w-0.5" />
      <Grip />
      <Tool icon="wcs" label="显示 WCS" active />
      <Tool icon="wcsDir" label="WCS 方向" />
      <Tool icon="palette" label="编辑对象显示" />
      <Tool icon="showHide" label="显示和隐藏" />
      <Tool icon="hide" label="隐藏" />
      <Tool icon="show" label="显示" />
      <Overflow chevron={false} />
      <span className="w-[3px]" />
      <Sep />
      <span className="w-0.5" />
      <Grip />
      <Tool icon="dist" label="测量距离" />
      <Tool icon="angle" label="测量角度" />
      <span className="w-1" />
      <Sep />
      <Tool icon="volume" label="内容积计算器" />
      <Overflow chevron={false} />
    </div>
  );
}

function FilterRow() {
  return (
    <div className="flex h-[30px] shrink-0 items-center bg-linear-to-b from-[#c2c2c2] to-[#dadada] pr-1.5 pl-[5px]">
      <div className="relative flex h-5 w-[143px] shrink-0">
        <select aria-label="选择过滤器" className="h-full w-full appearance-none rounded-[3px] border border-[#555] bg-white pr-4 leading-[18px] text-black">
          <option>没有选择过滤器</option>
        </select>
        <span className="pointer-events-none absolute top-px right-px flex h-[18px] w-4 items-center justify-center bg-linear-to-b from-[#3f6fb4] to-[#a6d4fa]">
          <svg viewBox="0 0 10 6" className="h-1.5 w-2.5" aria-hidden="true"><path d="M0 0h10L5 6z" fill="#000" /></svg>
        </span>
      </div>
      <button type="button" aria-label="类型过滤" className="ml-2 flex items-center gap-[3px]">
        <Svg size="size-4" box="0 0 16 16">
          <path d="M.5 .5h15v15H.5z" stroke="#d04848" />
          <path d="M7 1v12M2 6.500h10" stroke="#777" /><circle cx="7" cy="6.500" r="2" stroke="#d02020" />
          <path d="M8 8h7l-2.500 3v4h-2v-4z" fill="#f6e02c" stroke="#a88a10" strokeWidth=".6" />
        </Svg>
        <Caret />
      </button>
      <button type="button" aria-label="返回" className="ml-1.5">
        <Svg size="size-4" box="0 0 16 16"><path d="M2 10l5-4v2.500c3 0 5-1 5-4h1.500c1 5-2 8-6.500 8V15z" fill="#9fb0ae" stroke="#8b9c9a" strokeWidth=".6" /></Svg>
      </button>
      <button type="button" aria-label="清除选择" className="ml-2">
        <Svg size="size-4" box="0 0 16 16"><path d="M1 8l5-5 5-1 4 5v4l-5 3-6-1-3-2z" fill="#fff" stroke="#446" strokeWidth=".9" /><path d="M1 8l6 2 1 4M7 10l8-3" stroke="#446" strokeWidth=".9" /><path d="M6 6l4-2" stroke="#d83030" strokeWidth="1.500" /></Svg>
      </button>
      <button type="button" aria-label="恢复选择" className="ml-[7px]">
        <Svg size="size-4" box="0 0 16 16"><path d="M1.500 5C3 1 7 1 8 4" stroke="#1c2450" strokeWidth="1.500" /><path d="M0 2v5h5z" fill="#1c2450" /><path d="M10.500 5v11M5 10.500h11" stroke="#555" /><circle cx="10.500" cy="10.500" r="2.500" stroke="#d02020" /></Svg>
      </button>
      <button type="button" aria-label="在导航器中查找" className="ml-[7px]">
        <Svg size="size-[17px]" box="0 0 16 16"><path d="M0 2l4-1 1 2 3-2 2 3-3 2-3-1-2 1z" fill="#667" stroke="#334" strokeWidth=".6" /><path d="M9 5v10M9 8h3M9 13h3" stroke="#4550b5" strokeWidth=".9" /><path d="M11.500 6.500h3v3h-3zM11.500 11.500h3v3h-3z" fill="#ffe24a" stroke="#886" strokeWidth=".7" /></Svg>
      </button>
      <span className="mt-3 ml-auto"><Caret /></span>
    </div>
  );
}

/* ---------- left resource panel ---------- */

const TABS = [
  {
    label: '装配导航器', cls: 'h-[45px] -ml-0.5 bg-[#ececec]',
    art: <><path d="M3 1h5v5H3zM3 6h5v5H3zM8 6h5v5H8z" fill="#f8ee1c" stroke="#9a8f1c" /><path d="M13 11.500h11M18 21.500h6" stroke="#555" /><path d="M5 12v12M5 18.500h5" stroke="#7580d0" /><path d="M10.500 15.500h6v6h-6z" fill="#f8ee1c" stroke="#777" /></>,
  },
  {
    label: '部件导航器', cls: 'h-10 mt-px bg-[#dedede]',
    art: <><path d="M1 3v6c0 2 8 2 8 0V3" fill="#e8b0b0" stroke="#a03c3c" /><ellipse cx="5" cy="3" rx="4" ry="1.500" fill="#f8dcdc" stroke="#a03c3c" /><path d="M10 11.500h14M18 22.500h6" stroke="#555" /><path d="M4 12v12M4 19.500h5" stroke="#7580d0" /><circle cx="13.500" cy="19.500" r="3.500" fill="#fff" stroke="#a05050" /><circle cx="13.500" cy="19.500" r="1.300" stroke="#a05050" /></>,
  },
  {
    label: '浏览器', cls: 'h-[41px] mt-[13px] bg-[#dedede]',
    art: <><path d="M4 2h12l5 5v15H4z" fill="#fff0a0" stroke="#8c95ac" /><path d="M15 1.500l6.500 6H15z" fill="#c5d4f4" stroke="#7c8cc0" strokeWidth=".7" /><circle cx="12" cy="14" r="5.500" fill="#3858c8" /><path d="M8 11c3-3 6-1 5 2s-4 3-5 1zM12 17c3-3 6-1 2 2z" fill="#3cc04a" /></>,
  },
  {
    label: '历史', cls: 'h-[41px] mt-[13px] bg-[#dedede]',
    art: <><circle cx="12" cy="12.500" r="9.500" fill="#e8f6fb" stroke="#7b8890" strokeWidth="1.600" /><path d="M12 6v6.500h6" stroke="#222" strokeWidth="1.400" /><path d="M12 4v1.500M12 19.500V21M3.500 12.500H5M19 12.500h1.500M6.500 7l1 1M16.500 17l1 1M6.500 18l1-1M16.500 8l1-1" stroke="#2a78b0" /></>,
  },
  {
    label: '系统材料', cls: 'h-[41px] mt-px bg-[#dedede]',
    art: <><path d="M2 4l6-1v17l-3 1-3-1z" fill="#dbe5e8" stroke="#8a9ca2" /><path d="M8 2h14v20H8z" fill="#f5f8fa" stroke="#8a9ca2" /><circle cx="13" cy="7" r="1.800" fill="#3838c8" /><circle cx="13" cy="12" r="1.800" fill="#28b038" /><circle cx="13" cy="17" r="1.800" fill="#e02040" /><path d="M16 7.500h4M16 12.500h4M16 17.500h4" stroke="#444" /></>,
  },
  {
    label: '可视化', cls: 'h-[41px] mt-px bg-[#dedede]',
    art: <><path d="M2 1h8v4H2z" fill="#f03818" /><path d="M2 5h8v4H2z" fill="#f8c818" /><path d="M2 9h8v4H2z" fill="#58e028" /><path d="M2 13h8v4H2z" fill="#18c8e8" /><path d="M2 17h8v6H2z" fill="#1c38e0" /><path d="M9 2l4 4 3-4v5l4 1-4 2 1 4-4-3-4 3 1-5-3-2h3z" fill="#f2f48a" opacity=".9" /><path d="M16 12l5 9" stroke="#5868c0" strokeWidth="2.600" /></>,
  },
  {
    label: '更多资源', cls: 'h-[17px] mt-px bg-[#dedede]',
    art: <><path d="M4 13h5v4H4z" fill="#2848b8" /><path d="M9 14l4-1 2-4 2 4 5-1-3 5z" fill="#eef060" /></>,
  },
];

const SCROLLERS = [
  ['到顶部', 'M2 1.500h7M5.500 3l4 4h-8z', '#9a9a9a'],
  ['向上', 'M5.500 3l4 4h-8z', '#9a9a9a'],
  ['向下', 'M5.500 7.500l-4-4h8z', '#333'],
  ['到底部', 'M5.500 7l-4-4h8zM2 9h7', '#333'],
];

function ResourceTabs() {
  return (
    <div className="flex w-[33px] shrink-0 flex-col bg-linear-to-r from-[#bcbcbc] from-0% via-[#adadad] via-85% to-[#858585] pt-[13px] pl-1.5">
      {TABS.map((t) => (
        <button key={t.label} type="button" aria-label={t.label} className={`flex shrink-0 items-center overflow-hidden rounded-l-xs border-2 border-r-0 border-[#747474] shadow-[inset_1px_1px_#fff] ${t.cls}`}>
          <Svg>{t.art}</Svg>
        </button>
      ))}
      <div className="mt-1 ml-1 flex flex-col gap-px">
        {SCROLLERS.map(([label, d, color]) => (
          <button key={label} type="button" aria-label={label} className="flex size-[15px] items-center justify-center border border-[#777] bg-[#ededed]">
            <svg viewBox="0 0 11 11" className="size-[11px]" aria-hidden="true"><path d={d} fill={color} stroke={color} strokeWidth=".8" /></svg>
          </button>
        ))}
      </div>
    </div>
  );
}

const Chevron = ({ d }) => (
  <svg viewBox="0 0 12 12" className="size-3" fill="none" stroke="#5a5a5a" strokeWidth="2.400" aria-hidden="true"><path d={d} /></svg>
);

function Section({ label }) {
  return (
    <button type="button" className="flex h-[23px] w-full items-stretch border-t border-r border-b border-t-white border-r-[#888] border-b-[#aaa] bg-linear-to-b from-[#f8f8f8] to-[#cfcfcf] text-left">
      <span className="flex flex-1 items-center pl-1.5 text-[13px] leading-4 font-bold">{label}</span>
      <span className="flex w-[23px] items-center justify-center border-l border-[#9a9a9a]"><Chevron d="M1 2l5 7 5-7" /></span>
    </button>
  );
}

function Navigator() {
  return (
    <section className="flex w-[226px] shrink-0 flex-col border-t border-l border-t-white border-l-[#8c8c8c] bg-[#ebebeb] pt-1.5 pr-[11px] pb-1">
      <div className="flex items-center">
        <span className="flex w-[33px] justify-center pl-1">
          <Svg size="size-3" box="0 0 12 12"><path d="M1 11l3-3" stroke="#000" strokeWidth="1.300" /><path d="M3 5l4-3 4 1v4L8 10 4 9z" fill="#111" /><path d="M6 4l3-1 1 2-3 2z" fill="#f5ee3a" /><path d="M3 6l2 3" stroke="#f5ee3a" /></Svg>
        </span>
        <h2 className="flex h-[23px] flex-1 items-center border-t border-r border-b border-t-white border-r-[#888] border-b-[#999] bg-linear-to-b from-[#f4f4f4] to-[#d2d2d2] pl-1 text-[13px] leading-4 font-bold">装配导航器</h2>
      </div>
      <div className="mt-1 ml-2 flex min-h-0 flex-1 flex-col border border-[#666] bg-white">
        <div className="min-h-0 flex-1 overflow-hidden bg-[repeating-linear-gradient(#f6f6f6_0_17px,#e3e3e3_17px_18px,#fff_18px_35px,#e3e3e3_35px_36px)] bg-[position:0_38px]">
          <table className="w-full border-collapse">
            <thead>
              <tr className="h-5 border-b border-[#999] bg-linear-to-b from-[#f8f8f8] to-[#d9d9d9]">
                <th className="pl-1.5 text-left leading-4 font-normal">描述性部件名</th>
              </tr>
            </thead>
            <tbody>
              <tr className="h-[18px] border-b border-[#e3e3e3] bg-white">
                <td className="p-0">
                  <label className="flex h-[17px] items-center pl-2.5">
                    <span className="w-2.5 border-t border-dotted border-[#999]" />
                    <span className="relative ml-[3px] flex items-center">
                      <input type="checkbox" defaultChecked className="size-[11px] appearance-none border border-black bg-white" />
                      <svg viewBox="0 0 12 12" className="pointer-events-none absolute bottom-0 left-0 size-3" fill="none" aria-hidden="true"><path d="M2 5l3 5 6-9" stroke="#d01818" strokeWidth="2" /></svg>
                    </span>
                    <svg viewBox="0 0 12 12" className="mx-1 size-3" stroke="#000" aria-hidden="true"><path d="M.5 3.500l3-3h8l-3 3z" fill="#fffbb0" /><path d="M.5 3.500h8v8h-8z" fill="#fff480" /><path d="M8.500 3.500l3-3v8l-3 3z" fill="#b8a80c" /></svg>
                    <span className="ml-px text-[13px] leading-4 text-[#333]">bottom_box_core_013</span>
                  </label>
                </td>
              </tr>
            </tbody>
          </table>
        </div>
        <div className="flex h-[17px] shrink-0 items-center bg-[#f1f1f1] px-1">
          <button type="button" aria-label="向左滚动"><svg viewBox="0 0 8 8" className="size-2" fill="none" stroke="#444" strokeWidth="1.600" aria-hidden="true"><path d="M6 0L2 4l4 4" /></svg></button>
          <span className="flex h-[15px] flex-1 pl-1.5"><span className="w-[55px] bg-[#cbcbcb]" /></span>
          <button type="button" aria-label="向右滚动"><svg viewBox="0 0 8 8" className="size-2" fill="none" stroke="#444" strokeWidth="1.600" aria-hidden="true"><path d="M2 0l4 4-4 4" /></svg></button>
        </div>
      </div>
      <div className="ml-2 flex h-3 items-center gap-1">
        <span className="h-0.5 flex-1 border-t border-[#aaa] bg-white" />
        <span className="h-[5px] w-[35px] border border-t-white border-r-[#888] border-b-[#888] border-l-white bg-[#ddd]" />
        <span className="h-0.5 flex-1 border-t border-[#aaa] bg-white" />
      </div>
      <div className="ml-2">
        <Section label="预览" />
        <Section label="相关性" />
      </div>
    </section>
  );
}

/* ---------- graphics window ---------- */

function Model() {
  return (
    <svg viewBox="263 290 1101 377" className="h-full w-full" fill="none" role="img" aria-label="bottom_box_core_013">
      <defs>
        <linearGradient id="roll" gradientUnits="userSpaceOnUse" x1="706" y1="405" x2="732" y2="483">
          <stop offset="0" stopColor="#ee3b3b" /><stop offset=".4" stopColor="#ff4a4a" /><stop offset=".65" stopColor="#e23838" /><stop offset="1" stopColor="#aa2b2b" />
        </linearGradient>
        <linearGradient id="wallL" gradientUnits="userSpaceOnUse" x1="398" y1="430" x2="450" y2="412">
          <stop offset="0" stopColor="#6b1919" /><stop offset=".5" stopColor="#a82a2a" /><stop offset="1" stopColor="#ee3b3b" />
        </linearGradient>
        <linearGradient id="wallB" gradientUnits="userSpaceOnUse" x1="455" y1="600" x2="525" y2="585">
          <stop offset="0" stopColor="#8c2323" /><stop offset=".4" stopColor="#5c1616" /><stop offset="1" stopColor="#962626" />
        </linearGradient>
        <linearGradient id="wallR" gradientUnits="userSpaceOnUse" x1="1035" y1="410" x2="1090" y2="392">
          <stop offset="0" stopColor="#992626" /><stop offset="1" stopColor="#d43535" />
        </linearGradient>
        <radialGradient id="ballL" gradientUnits="userSpaceOnUse" cx="480" cy="512" r="42">
          <stop offset="0" stopColor="#ff8585" /><stop offset=".35" stopColor="#f04040" /><stop offset=".7" stopColor="#d03333" /><stop offset="1" stopColor="#8c2323" />
        </radialGradient>
        <radialGradient id="ballR" gradientUnits="userSpaceOnUse" cx="1033" cy="335" r="38">
          <stop offset="0" stopColor="#ffdede" /><stop offset=".3" stopColor="#ff5c5c" /><stop offset="1" stopColor="#c93232" />
        </radialGradient>
      </defs>

      <g transform="translate(540 285) scale(.34439 .3325)">
        <path d="M66 442L95 540 130 655 210 880 316 1134 235 874z" fill="#4a7a61" />
        <path d="M235 874L1440 462 1522 720 316 1134z" fill="#74c19b" />
        <path d="M66 440L1272 28 1440 462 235 874z" fill="#f43d3d" stroke="#cc3333" strokeWidth="7" />

        <path d="M384 385Q380 340 418 320L440 345 490 478Q450 486 442 520z" fill="url(#wallL)" />
        <path d="M392 350Q396 328 420 320L430 345 390 365z" fill="#e03a3a" />
        <path d="M450 556L503 552 530 638Q490 654 472 635z" fill="url(#wallB)" />
        <path d="M512 550L710 486 732 572 535 636z" fill="#992626" />
        <path d="M822 446L1022 380 1046 460 855 525z" fill="#992626" />
        <path d="M1022 378L1062 342 1103 425Q1096 448 1050 460z" fill="url(#wallR)" />
        <path d="M488 480L1005 305Q1058 300 1062 340 1050 368 1022 378L503 552 445 552Q440 500 488 480z" fill="url(#roll)" />
        <path d="M488 480L512 548Q470 562 445 552 440 495 488 480z" fill="url(#ballL)" />
        <path d="M1005 305Q1050 298 1060 340 1048 368 1022 376z" fill="url(#ballR)" />
        <path d="M955 190Q1010 185 1022 235L975 250z" fill="#992626" />
        <path d="M978 262Q1020 250 1035 270L1045 300 990 305z" fill="#ff4444" />
        <path d="M945 140Q985 140 1000 165L1010 190 955 185z" fill="#f94141" />

        <path d="M706 486L824 446 862 572 760 602z" fill="#cc3333" />
        <path d="M720 497L825 463M728 520L832 486M734 543L840 508M742 562L848 528M752 584L858 548M756 594L860 561" stroke="#f43d3d" strokeWidth="8" />
        <path d="M762 604L860 572 886 645 784 682z" fill="#992626" />

        <g stroke="#cc3333" strokeWidth="6.500">
          <path d="M395 322Q375 350 379 385L468 635Q480 655 522 650L735 574M858 528L1050 462Q1100 448 1102 425L1005 165Q985 132 935 138" />
          <path d="M386 362L430 345 945 175Q975 160 998 162" />
          <path d="M415 455L465 432 960 262Q1000 250 1028 260" />
          <path d="M450 490L488 478 1000 302Q1030 290 1052 305" />
          <path d="M410 318L430 345 500 552 530 638" strokeWidth="9" />
          <path d="M935 138L1022 378 1048 462" strokeWidth="9" />
          <path d="M940 190L985 325 1060 298" />
          <path d="M708 487L782 686" strokeWidth="12" />
          <path d="M824 446L890 648" strokeWidth="12" />
          <path d="M512 550L705 486M826 446L1022 378M1022 378Q1045 372 1062 350" />
          <path d="M448 556H503" stroke="#f04040" />
          <ellipse cx="708" cy="306" rx="147" ry="62" transform="rotate(-17 708 306)" />
        </g>

        <path d="M732 366L738 388M738 388L757 460M765 480v7" stroke="#d8d8d8" strokeWidth="5" />
        <path d="M834 472L908 446" stroke="#d8d8d8" strokeWidth="6" />
      </g>
      <g fontFamily="'DejaVu Sans', sans-serif" fontSize="12">
        <text x="785" y="388" fill="#c92f2f">ZC</text>
        <text x="795" y="424" fill="#d0d0d0">YC</text>
        <text x="872" y="428" fill="#e0e0e0">XC</text>
      </g>

      <path d="M330 569l2 4 2-4M332 573l3 10" stroke="#00e800" strokeWidth="1" />
      <path d="M328 556L338 587" stroke="#0000f0" strokeWidth="2" />
      <path d="M343 590L378 578" stroke="#f00" strokeWidth="2" />
      <circle cx="339" cy="590.500" r="4.500" fill="#999" />
      <g fontFamily="'DejaVu Sans', sans-serif" fontSize="11">
        <text x="321" y="553" fill="#0000f0">Z</text>
        <text x="386" y="579" fill="#f00" fontSize="9">X</text>
      </g>
    </svg>
  );
}

function Viewport() {
  return (
    <main className="relative min-w-0 flex-1 border-t border-r-2 border-b border-l-2 border-t-[#777] border-r-[#f0f0f0] border-b-[#f0f0f0] border-l-[#888]">
      <div className="relative h-full overflow-hidden border border-l-2 border-[#cc3333] bg-linear-to-b from-[#98bedd] to-[#e5e5e5] to-75%">
        <Model />
        <p className="absolute bottom-0 left-[3px] font-['DejaVu_Sans','Liberation_Sans',sans-serif] text-xs leading-4 font-bold text-[#cc3333]">TOP WORK Camera Top</p>
      </div>
    </main>
  );
}

function AssemblyRow() {
  return (
    <div className="flex h-[69px] shrink-0 items-start border-t border-white bg-linear-to-b from-[#e4e4e4] to-[#cacaca]">
      <span className="w-[286px] shrink-0 self-stretch border-r border-[#f6f6f6]" />
      <div className="flex flex-1 items-start pt-0.5 pl-[3px]">
        <Grip />
        <Tool icon="addComp" label="添加组件" />
        <Tool icon="newParent" label="新建父对象" />
        <Tool icon="mate" label="配对组件" />
        <Tool icon="repos" label="重定位组件" />
        <Tool icon="mirror" label="镜像装配" />
        <Tool icon="suppress" label="编辑抑制状态" />
        <Tool icon="arrange" label="编辑布置" disabled />
        <span className="w-1" />
        <Sep />
        <Tool icon="explode" label="爆炸图" />
        <Tool icon="sequence" label="装配序列" />
        <span className="w-1" />
        <Sep />
        <Tool icon="workPart" label="转为工作部件" disabled />
        <Tool icon="showPart" label="转为显示部件" disabled />
        <Tool icon="linkInfo" label="部件间链接浏览器" />
        <span className="w-[5px]" />
        <Sep />
        <Tool icon="clearance" label="间隙分析" />
        <Overflow chevron={false} />
      </div>
    </div>
  );
}

function Taskbar() {
  return (
    <footer className="flex h-2 shrink-0 items-end bg-[#020308]">
      <span className="ml-5 h-px w-1.5 bg-[#ddd]" />
      <span className="ml-6 h-px w-2 bg-[#888]" />
      <span className="ml-[60px] h-px w-3.5 bg-[#d03a28]" />
      <span className="ml-[26px] h-px w-1.5 bg-[#2a8ae0]" />
      <span className="ml-[68px] h-px w-1 bg-[#ccc]" />
      <span className="ml-[42px] h-px w-0.5 bg-[#8ab81c]" />
      <span className="ml-[95px] h-px w-4 bg-[#5cb8f0]" />
      <span className="ml-[25px] h-px w-1 bg-[#801828]" />
      <span className="ml-10 h-px w-1 bg-[#ccc]" />
      <span className="mr-[25px] ml-auto h-px w-4 bg-[#eee]" />
    </footer>
  );
}

export default function App() {
  return (
    <div className="flex h-screen flex-col overflow-hidden bg-[#d6d6d6] font-['Noto_Sans','Noto_Sans_CJK_SC',sans-serif] text-xs text-black">
      <TitleBar />
      <div className="shrink-0 bg-linear-to-b from-[#e6e6e6] to-[#cccccc]">
        <MoldRow />
        <MenuRow />
        <StandardRow />
        <ViewRow />
      </div>
      <FilterRow />
      <div className="flex h-[21px] shrink-0 items-center border-t border-white bg-[#d9d9d9] pl-[3px]">
        <p className="flex-1 text-[13px] leading-5 font-bold">选择对象并使用 MB3，或者双击某一对象</p>
        <div className="flex w-[712px] self-stretch pr-px">
          <Sep />
          <span className="flex-1" />
          <Sep />
          <span className="w-[17px]" />
          <Sep />
          <span className="w-[35px]" />
          <Sep />
        </div>
      </div>
      <div className="relative flex h-4 shrink-0 flex-col border-t border-b border-t-[#989898] border-b-[#666] bg-linear-to-b from-[#bcbcbc] to-[#d4d4d4]">
        <span className="mx-[5px] mt-1 h-1 rounded-full border-t border-b border-t-[#999] border-b-[#f4f4f4] bg-[#c4c4c4]" />
        <div className="absolute -top-px left-9 z-10 flex h-[23px] w-[118px] border border-[#555] bg-[#333]">
          <button type="button" aria-label="上一页" className="flex w-5 items-center justify-center bg-[#efefef]"><Chevron d="M9 2L3 6l6 4" /></button>
          <span className="mx-px flex-1 bg-linear-to-b from-[#56627f] via-[#222b3f] via-50% to-black to-60%" />
          <button type="button" aria-label="下一页" className="flex w-5 items-center justify-center bg-[#efefef]"><Chevron d="M3 2l6 4-6 4" /></button>
        </div>
      </div>
      <div className="flex min-h-0 flex-1">
        <ResourceTabs />
        <Navigator />
        <Viewport />
      </div>
      <AssemblyRow />
      <Taskbar />
    </div>
  );
}
